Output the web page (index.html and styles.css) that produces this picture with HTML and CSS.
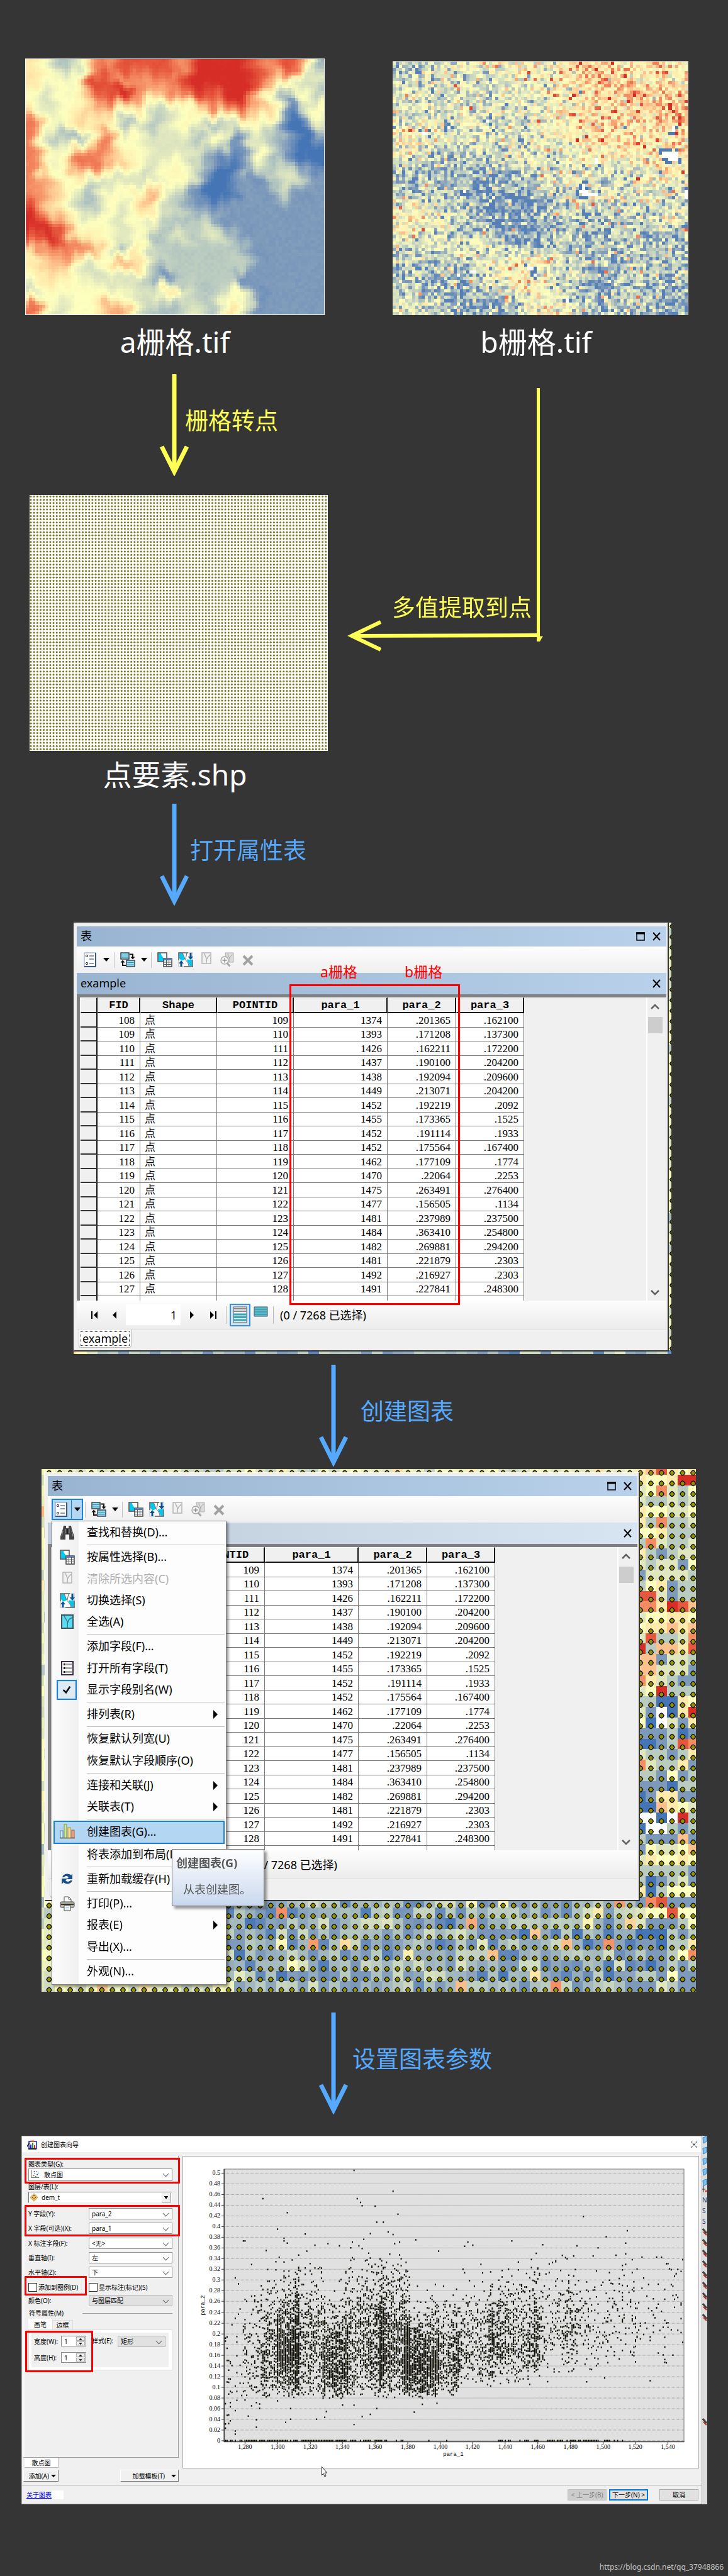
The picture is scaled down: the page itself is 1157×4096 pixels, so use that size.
FILE: index.html
```html
<!DOCTYPE html>
<html lang="zh-CN">
<head>
<meta charset="utf-8">
<title>栅格散点图制作流程</title>
<meta name="viewport" content="width=device-width, initial-scale=1">
<link rel="stylesheet" href="styles.css">
</head>
<body>
<svg class="sprite" aria-hidden="true">
  <symbol id="i-list" viewBox="0 0 24 24"><rect x="3" y="1" width="18" height="22" fill="#fbfcfe" stroke="#8494b4"/><path d="M21 1v22H3" fill="none" stroke="#3d5680" stroke-width="2"/><circle cx="7" cy="6" r="1.6" fill="none" stroke="#222"/><circle cx="7" cy="18" r="1.6" fill="none" stroke="#222"/><path d="M11 6h7M11 11h7M11 18h7" stroke="#8a9ab0" stroke-width="2"/></symbol>
  <symbol id="i-relate" viewBox="0 0 24 24"><rect x="1" y="1" width="13" height="10" fill="#8fdcf0" stroke="#3a4650" stroke-width="1.5"/><path d="M1 4.500h13M1 8h13" stroke="#4a8aa0"/><rect x="10" y="13" width="13" height="10" fill="#8fdcf0" stroke="#3a4650" stroke-width="1.500"/><path d="M10 16.500h13M10 20h13" stroke="#4a8aa0"/><path d="M15 3.500h5v5M9 21H4v-5" fill="none" stroke="#111" stroke-width="2"/><path d="M16.500 7.500h7l-3.500 4zM.5 16.500h7L4 12.500z" fill="#111"/></symbol>
  <symbol id="i-attr" viewBox="0 0 24 24"><rect x="1" y="1" width="14" height="14" fill="#fff" stroke="#444" stroke-width="1.500"/><path d="M2 2h4c0 5 5 5 4 12H2z" fill="#00c8f0"/><rect x="10" y="10" width="13" height="13" fill="#fff" stroke="#444" stroke-width="1.500"/><path d="M10 11.500h13" stroke="#5b7fae" stroke-width="3"/><path d="M10 16h13M10 19.500h13M14.500 12v11M18.500 12v11" stroke="#555"/></symbol>
  <symbol id="i-switch" viewBox="0 0 24 24"><rect x="1" y="1" width="22" height="22" fill="#fff" stroke="#555" stroke-width="1.500"/><path d="M2 2h5l4 9-5 3-4-4zM14 12l8-3v13h-4c0-4-3-5-4-10z" fill="#00c8f0"/><path d="M7 1l4 10c3 4 6 6 6 12M14 1l-2 10" fill="none" stroke="#666"/><path d="M16 0h8v12h-8z" fill="#fff" opacity=".7"/><path d="M0 13h9v11H0z" fill="#fff" opacity=".7"/><path d="M18.500 1v6h-3l4.500 5 4-5h-2.500V1zM3.500 23v-5H1l4-5 4 5H6.500v5z" fill="#0c4f93"/></symbol>
  <symbol id="i-clear" viewBox="0 0 24 24"><rect x="5" y="1" width="14" height="17" fill="#f2f2f2" stroke="#b4b4b4" stroke-width="1.500"/><path d="M9 2c0 5 5 5 3 15M18 4c-2 3-5 3-5 7" fill="none" stroke="#b4b4b4" stroke-width="1.500"/></symbol>
  <symbol id="i-zoomsel" viewBox="0 0 24 24"><path d="M9 1h13v15H12z" fill="#dcdcdc" stroke="#b0b0b0"/><path d="M13 2c0 5 4 5 3 13M21 4c-3 1-5 4-5 6" fill="none" stroke="#a8a8a8"/><circle cx="8" cy="13" r="6" fill="#f4f4f4" stroke="#a8a8a8" stroke-width="1.500"/><path d="M8 9.500v7M4.500 13h7" stroke="#909090" stroke-width="1.500"/><path d="M12 17.500l4.500 5" stroke="#a8a8a8" stroke-width="3"/></symbol>
  <symbol id="i-delete" viewBox="0 0 24 24"><path d="M5 6l14 14M19 6L5 20" stroke="#a2a2a2" stroke-width="4"/></symbol>
  <symbol id="i-all" viewBox="0 0 24 24"><rect x="3" y="1" width="18" height="21" fill="#5adcf2" stroke="#3c5560" stroke-width="2"/><path d="M7 2c1 6 7 5 5 19M20 5c-4 2-7 3-7 8" fill="none" stroke="#357a8c" stroke-width="1.500"/></symbol>
  <symbol id="i-fields" viewBox="0 0 24 24"><rect x="3" y="1" width="18" height="21" fill="#fff" stroke="#3d2b4a" stroke-width="2"/><path d="M6 5.500h3M6 11.500h3M6 17.500h3" stroke="#111" stroke-width="3"/><path d="M10 5.500h9M10 11.500h9M10 17.500h9" stroke="#9a9a9a" stroke-width="2.500"/></symbol>
  <symbol id="i-find" viewBox="0 0 24 24"><path d="M6 1h4v4h4V1h4l1 5 4 12v5h-8v-8H9v8H1v-5L5 6z" fill="#454545"/><path d="M5 9l-2 9M19 9l2 9M9 6v7M15 6v7" stroke="#9a9a9a"/><path d="M12 6v8" stroke="#222" stroke-width="2"/></symbol>
  <symbol id="i-chart" viewBox="0 0 24 24"><path d="M0 22.500h24" stroke="#777" stroke-width="2"/><rect x="1" y="11" width="4" height="11" fill="#cfe6f6" stroke="#4f86b4"/><rect x="7" y="1" width="4" height="21" fill="#cfe39c" stroke="#7a9a3c"/><rect x="13" y="6" width="4" height="16" fill="#f5dc9a" stroke="#c09428"/><rect x="19" y="10" width="4" height="12" fill="#e9a98c" stroke="#b0583a"/></symbol>
  <symbol id="i-reload" viewBox="0 0 24 24"><path d="M4 9c2-6 10-7 14-3l2-3v9h-9l3-3c-3-3-6-2-7 0zM20 14c-2 6-10 7-14 3l-3 3v-9h9l-3 3c3 3 6 2 8 0z" fill="#174f86"/></symbol>
  <symbol id="i-print" viewBox="0 0 24 24"><path d="M7 1h7l4 4v6H7z" fill="#fff" stroke="#555"/><path d="M14 1v4h4" fill="none" stroke="#555"/><rect x="1" y="9" width="22" height="9" rx="2" fill="#b9b7a3" stroke="#444"/><path d="M2 13h20" stroke="#333" stroke-width="2"/><rect x="7" y="15" width="10" height="8" fill="#fff" stroke="#444"/><path d="M9 18h6M9 20.500h6" stroke="#7fb0dc"/></symbol>
  <symbol id="i-arrow" viewBox="0 0 46 162"><path d="M19.500 0h7v152h-7z" fill="currentColor"/><path d="M3 115l20 40 20-40" fill="none" stroke="currentColor" stroke-width="7"/></symbol>
  <symbol id="i-cross" viewBox="0 0 14 14"><path d="M1 1l11 12M12 1L1 13" stroke="#000" stroke-width="2"/></symbol>
  <symbol id="i-box" viewBox="0 0 14 14"><path d="M1 1h12v12H1z" fill="none" stroke="#000" stroke-width="1.500"/><path d="M0 2h14" stroke="#000" stroke-width="3"/></symbol>
</svg>

<main class="flow">
  <section class="sources">
    <div class="branch-a">
      <canvas class="map map-a" id="mapA" width="92" height="79" role="img" aria-label="a栅格"></canvas>
      <p class="caption">a栅格.tif</p>
      <div class="step step-left yellow"><svg class="arrow"><use href="#i-arrow"/></svg><span>栅格转点</span></div>
      <canvas class="map map-points" id="mapPoints" width="474" height="407" role="img" aria-label="点要素"></canvas>
      <p class="caption caption-points">点要素.shp</p>
      <div class="step step-left step-open blue"><svg class="arrow"><use href="#i-arrow"/></svg><span>打开属性表</span></div>
    </div>
    <div class="branch-b">
      <canvas class="map map-b" id="mapB" width="92" height="79" role="img" aria-label="b栅格"></canvas>
      <p class="caption caption-b">b栅格.tif</p>
      <div class="elbow yellow">
        <svg viewBox="0 0 310 416" width="310" height="416" aria-hidden="true"><path d="M300 0h5v395l5-1-5 9h-5z" fill="currentColor"/><path d="M12 391l292-1v6l-292 1z" fill="currentColor"/><path d="M52 372L6 394l46 22" fill="none" stroke="currentColor" stroke-width="6"/></svg>
        <span>多值提取到点</span>
      </div>
    </div>
  </section>

  <section class="shot shot-table">
    <canvas class="backdrop" id="strip" width="950" height="686"></canvas>
    <div class="win" data-window="plain"></div>
    <div class="mark mark-columns"></div>
    <span class="note note-a">a栅格</span>
    <span class="note note-b">b栅格</span>
  </section>

  <div class="step step-mid blue"><svg class="arrow"><use href="#i-arrow"/></svg><span class="far">创建图表</span></div>

  <section class="shot shot-menu">
    <canvas class="backdrop" id="dots" width="1040" height="831"></canvas>
    <div class="win inactive" data-window="menu"></div>
    <div class="menu" role="menu">
      <button role="menuitem"><svg><use href="#i-find"/></svg>查找和替换(D)...</button>
      <hr>
      <button role="menuitem"><svg><use href="#i-attr"/></svg>按属性选择(B)...</button>
      <button role="menuitem" disabled><svg><use href="#i-clear"/></svg>清除所选内容(C)</button>
      <button role="menuitem"><svg><use href="#i-switch"/></svg>切换选择(S)</button>
      <button role="menuitem"><svg><use href="#i-all"/></svg>全选(A)</button>
      <hr>
      <button role="menuitem">添加字段(F)...</button>
      <button role="menuitem"><svg><use href="#i-fields"/></svg>打开所有字段(T)</button>
      <button role="menuitem"><svg class="ticked" viewBox="0 0 30 30"><rect x="1" y="1" width="28" height="28" fill="#deebf5" stroke="#1883d7" stroke-width="2"/><path d="M10 15l4 4 6-9" fill="none" stroke="#111" stroke-width="2.500"/></svg>显示字段别名(W)</button>
      <hr>
      <button role="menuitem" class="sub">排列表(R)</button>
      <hr>
      <button role="menuitem">恢复默认列宽(U)</button>
      <button role="menuitem">恢复默认字段顺序(O)</button>
      <hr>
      <button role="menuitem" class="sub">连接和关联(J)</button>
      <button role="menuitem" class="sub">关联表(T)</button>
      <hr>
      <button role="menuitem" class="current"><svg><use href="#i-chart"/></svg>创建图表(G)...</button>
      <button role="menuitem">将表添加到布局(L)</button>
      <hr>
      <button role="menuitem"><svg><use href="#i-reload"/></svg>重新加载缓存(H)</button>
      <hr>
      <button role="menuitem"><svg><use href="#i-print"/></svg>打印(P)...</button>
      <button role="menuitem" class="sub">报表(E)</button>
      <button role="menuitem">导出(X)...</button>
      <hr>
      <button role="menuitem">外观(N)...</button>
    </div>
    <div class="tip" role="tooltip"><b>创建图表(G)</b><span>从表创建图。</span></div>
  </section>

  <div class="step step-mid step-params blue"><svg class="arrow"><use href="#i-arrow"/></svg><span>设置图表参数</span></div>

  <section class="wizard-wrap">
    <div class="wizard">
      <header class="wizard-title">
        <svg viewBox="0 0 16 16" width="16" height="16" aria-hidden="true"><path d="M3 3h12v11H3z" fill="#fff" stroke="#1a1ad0" stroke-width="1.500"/><path d="M0 11l4-6M2 15h13" stroke="#111" stroke-width="1.500"/><path d="M6 8v6" stroke="#1a1ad0" stroke-width="2"/><path d="M9 5v9" stroke="#1c9a3c" stroke-width="2"/><path d="M12 9v5" stroke="#d22" stroke-width="2"/><path d="M5 1l3 1 2-2 1 3-3 1z" fill="#f70"/></svg>
        <span>创建图表向导</span>
        <button class="bare" aria-label="关闭"><svg viewBox="0 0 12 12" width="12" height="12"><path d="M1 1l10 10M11 1L1 11" stroke="#333"/></svg></button>
      </header>
      <div class="wizard-body">
        <form class="params">
          <div class="panel">
            <div class="group group-type">
              <label for="type">图表类型(G):</label>
              <div class="pick with-icon tall"><svg viewBox="0 0 18 18" aria-hidden="true"><path d="M1 0v16h16" fill="none" stroke="#777" stroke-width="1.500"/><path d="M6 3h2v2H6z M12 9h2v2h-2z" fill="#22d"/><path d="M11 3h2v2h-2z" fill="#a3c"/><path d="M7 7h2v2H7z M9 13h2v2H9z" fill="#1a3"/><path d="M5 11h2v2H5z" fill="#d22"/><path d="M14 6h2v2h-2z" fill="#29c"/></svg><select id="type"><option>散点图</option></select></div>
            </div>
            <label class="layer-label" for="layer">图层/表(L):</label>
            <div class="pick with-icon classic"><svg viewBox="0 0 18 18" aria-hidden="true"><path d="M9 1l8 8-8 8-8-8z" fill="#f3c668" stroke="#a8823a"/><path d="M8 4h2v2H8zM5 8h2v2H5zM11 8h2v2h-2zM8 11h2v2H8z" fill="#443"/></svg><select id="layer"><option>dem_t</option></select></div>
            <div class="group group-fields">
              <div class="row"><label for="fy">Y 字段(Y):</label><div class="pick"><select id="fy"><option>para_2</option></select></div></div>
              <div class="row"><label for="fx">X 字段(可选)(X):</label><div class="pick"><select id="fx"><option>para_1</option></select></div></div>
            </div>
            <div class="row"><label for="fl">X 标注字段(F):</label><div class="pick"><select id="fl"><option>&lt;无&gt;</option></select></div></div>
            <div class="row"><label for="va">垂直轴(I):</label><div class="pick"><select id="va"><option>左</option></select></div></div>
            <div class="row"><label for="ha">水平轴(Z):</label><div class="pick"><select id="ha"><option>下</option></select></div></div>
            <div class="checks"><label class="group group-legend"><input type="checkbox">添加到图例(D)</label><label><input type="checkbox">显示标注(标记)(S)</label></div>
            <div class="row"><label for="co">颜色(O):</label><div class="pick grey"><select id="co"><option>与图层匹配</option></select></div></div>
            <div class="legend"><span>符号属性(M)</span><i></i></div>
            <div class="tabs"><button type="button" class="on">画笔</button><button type="button">边框</button></div>
            <div class="tabpanel">
              <div class="sizes group group-sizes">
                <label for="w">宽度(W):</label><div class="spin"><input id="w" type="number" value="1"><svg viewBox="0 0 16 16"><path d="M1 1h14v6H1zM1 9h14v6H1z" fill="#f0f0f0" stroke="#aaa"/><path d="M5 6h6L8 3zM5 11h6l-3 3z" fill="#111"/></svg></div>
                <label for="h">高度(H):</label><div class="spin"><input id="h" type="number" value="1"><svg viewBox="0 0 16 16"><path d="M1 1h14v6H1zM1 9h14v6H1z" fill="#f0f0f0" stroke="#aaa"/><path d="M5 6h6L8 3zM5 11h6l-3 3z" fill="#111"/></svg></div>
              </div>
              <label for="st" class="style-label">样式(E):</label><div class="pick grey short"><select id="st"><option>矩形</option></select></div>
            </div>
          </div>
          <div class="bottom-tab">散点图</div>
          <div class="actions"><button type="button" class="raised">添加(A)<i></i></button><button type="button" class="raised wide">加载模板(T)<i></i></button></div>
        </form>
        <svg class="chart" id="chart" viewBox="0 0 820 496" role="img" aria-label="para_1 与 para_2 散点图"></svg>
      </div>
      <footer class="wizard-foot">
        <a href="#about">关于图表</a><i class="blank"></i>
        <button class="flat" disabled>&lt; 上一步(B)</button><button class="flat primary">下一步(N) &gt;</button><button class="flat cancel">取消</button>
      </footer>
      <svg class="cursor" viewBox="0 0 12 18" aria-hidden="true"><path d="M1 1v14l3-3 2 5 2-1-2-5h4z" fill="#fff" stroke="#333"/></svg>
    </div>
    <svg class="edge" id="edge" width="8" height="586" aria-hidden="true"></svg>
  </section>
  <p class="credit">https://blog.csdn.net/qq_37948866</p>
</main>
<script src="app.js"></script>
</body>
</html>
```
FILE: styles.css
```css
* { box-sizing: border-box; }
body {
  margin: 0;
  background: #353535;
  color: #000;
  font-family: "Noto Sans", "Noto Sans CJK SC", sans-serif;
}
button, input, select { font: inherit; color: inherit; }
.sprite { position: absolute; width: 0; height: 0; }
.flow { position: relative; padding: 93px 0 114px; overflow: hidden; }
.yellow { color: #ffff55; }
.blue { color: #55aaff; }

/* rasters and their captions */
.sources { display: grid; grid-template-columns: 540px 1fr; }
.branch-a { padding-left: 40px; }
.branch-b { padding-top: 4px; }
.map { display: block; }
.map-a { width: 476px; height: 408px; border: 1px solid #fff; image-rendering: pixelated; }
.map-b { width: 470px; height: 404px; margin-left: 84px; border-top: 1px solid #bbb; border-right: 1px solid #ddd; image-rendering: pixelated; }
.map-points { width: 474px; height: 407px; margin: 30px 0 0 7px; }
.caption {
  width: 476px;
  margin: 12px 0 0;
  padding-bottom: 3px;
  color: #fff;
  font-size: 46px;
  line-height: 60px;
  text-align: center;
}
.caption-points { margin-top: 7px; }
.caption-b { width: 456px; margin-left: 84px; }

/* flow arrows */
.step { display: flex; align-items: center; font-size: 37px; line-height: 48px; }
.step span { padding-bottom: 14px; }
.arrow { width: 46px; height: 162px; flex: none; }
.step-left { margin: 19px 0 0 214px; }
.step-left span { margin-left: -6px; }
.step-open { margin-top: 14px; }
.step-open span { margin-left: 2px; }
.step-mid { margin: 17px 0 0 507px; }
.step-mid span { margin-left: 7px; }
.step-mid .far { margin-left: 20px; }
.step-params { margin-top: 33px; }
.elbow { display: grid; width: 310px; margin: 41px 0 0 13px; }
.elbow svg, .elbow span { grid-area: 1 / 1; }
.elbow svg { overflow: visible; }
.elbow span { margin: 325px 0 0 70px; font-size: 37px; line-height: 48px; white-space: nowrap; }

/* attribute table windows */
.shot { position: relative; }
.shot-table { width: 950px; margin: 27px 0 0 117px; padding: 0 4px 4px 0; }
.shot-menu { width: 1040px; margin: 4px 0 0 66px; padding: 5px 89px 144px 5px; }
.backdrop { position: absolute; inset: 0; width: 100%; height: 100%; }
.win {
  position: relative;
  padding: 5px 2px 0 4px;
  background: #f0f0f0;
  border: 1px solid #fff;
  border-right: 2px solid #333;
  border-bottom: 2px solid #333;
  font-size: 18px;
}
.bar { display: flex; align-items: center; gap: 12px; height: 32px; padding: 0 8px 0 6px; background: linear-gradient(90deg, #99b4d1, #b9d1ea); line-height: 28px; }
.bar span { flex: 1; padding-bottom: 2px; }
.bar svg { width: 14px; height: 14px; display: block; }
.bar.sheet { height: 34px; }
.inactive .sheet { background: linear-gradient(90deg, #bfcddb, #d7e4f2); }
.inactive .sheet span { visibility: hidden; }
.bare { padding: 0; border: 0; background: none; }
.tools { display: flex; align-items: center; height: 42px; padding-left: 6px; background: linear-gradient(#fdfdfd, #efefef); }
.tools button { display: flex; align-items: center; height: 34px; padding: 0; border: 0; background: none; }
.tools svg { width: 24px; height: 24px; }
.tools .drop::after {
  content: "";
  margin-left: 9px;
  border: 5px solid transparent;
  border-top: 6px solid #000;
  border-bottom: 0;
}
.tools .drop { width: 50px; padding-left: 3px; margin-right: 3px; }
.tools .drop + i + .drop { padding-left: 0; width: 46px; }
.tools i { width: 1px; height: 25px; margin-right: 9px; background: #c4c4c4; }
.tools .gap { margin-right: 9px; }
.inactive .tools .drop:first-child { background: linear-gradient(90deg, #b3d7f3 31px, #1883d7 31px, #1883d7 32px, #b3d7f3 32px); outline: 2px solid #1883d7; outline-offset: -2px; }
.grid {
  display: flex;
  justify-content: space-between;
  height: 487px;
  overflow: hidden;
  border: solid #808080;
  border-width: 5px 0 0 5px;
  padding-left: 1px;
}
.attrs { width: 705px; border-spacing: 0; table-layout: fixed; font-family: "Liberation Serif", "Noto Sans CJK SC", serif; font-size: 17px; line-height: 19px; }
.attrs th { height: 25px; padding: 0; background: #f0f0f0; border: 1px solid #fff; border-right: 2px solid #111; border-bottom: 2px solid #111; font-family: "Liberation Mono", monospace; }
.attrs td { height: 22px; padding: 0 8px 0 7px; overflow: hidden; background: #fff; border: solid #777; border-width: 0 1px 1px 0; text-align: right; }
.attrs tr:nth-child(odd) td { height: 23px; }
.attrs td:first-child { background: #f0f0f0; border-right: 2px solid #111; border-bottom: 2px solid #333; }
.attrs td:nth-child(3) { text-align: left; }
.scroll { display: flex; flex-direction: column; align-items: center; width: 26px; margin-right: 6px; padding: 10px 0 8px; border-left: 2px solid #fff; }
.scroll svg { width: 14px; height: 9px; }
.scroll b { width: 23px; height: 26px; margin: 12px 0 auto; background: #cdcdcd; }
.nav { display: flex; align-items: center; height: 46px; padding-left: 22px; background: linear-gradient(#fdfdfd, #ececec); border-bottom: 1px solid #ddd; }
.nav svg { width: 12px; height: 14px; }
.nav button { padding: 0; border: 0; background: none; line-height: 0; }
.nav input { width: 87px; height: 33px; margin: 0 12px; padding: 0 6px; border: 0; background: #fff; text-align: right; }
.nav .first { margin-right: 20px; }
.nav .next { margin-right: 22px; }
.nav .last { margin-right: 14px; }
.nav i { width: 1px; height: 28px; background: #bbb; }
.nav .view { width: 33px; height: 36px; margin: 0 5px; background: #cfe5f7; border: 2px solid #3c8edb; }
.nav .view svg, .nav .view2 svg { width: 23px; height: 27px; }
.nav .view2 { margin-right: 8px; }
.nav span { margin-left: 10px; padding-bottom: 2px; white-space: nowrap; }
.sheets { height: 33px; padding-left: 3px; }
.sheets button { display: block; height: 29px; padding: 0 5px; border: 1px solid #bbb; border-top: 0; border-radius: 0 0 4px 4px; background: #fff; line-height: 24px; outline: 1px dotted #333; outline-offset: -4px; }

/* annotations over the first window */
.mark { position: absolute; border: 3px solid #f00; }
.mark-columns { left: 343px; top: 98px; width: 271px; height: 510px; }
.note { position: absolute; top: 62px; color: #f00; font-size: 23px; line-height: 32px; }
.note-a { left: 392px; }
.note-b { left: 526px; }

/* drop-down menu and its tooltip */
.menu {
  position: absolute;
  left: 16px;
  top: 82px;
  display: flex;
  flex-direction: column;
  width: 278px;
  height: 738px;
  padding: 1px 2px 3px;
  border: 1px solid #808080;
  background: linear-gradient(90deg, #fcfcfc, #f0f0f0 42px, #fdfdfd 42px);
  box-shadow: 3px 3px 4px rgba(0, 0, 0, .4);
  font-size: 18px;
}
.menu button { position: relative; flex: 1; min-height: 0; padding: 0 0 2px 52px; border: 1px solid transparent; background: none; line-height: 24px; text-align: left; white-space: nowrap; }
.menu button:disabled { color: #b0b0b0; }
.menu svg { position: absolute; left: 9px; top: 4px; width: 24px; height: 24px; }
.menu svg.ticked { left: 4px; top: 0; width: 32px; height: 32px; }
.menu hr { width: 219px; height: 1px; margin: 2px 0 2px auto; border: 0; background: #bdbdbd; }
.menu .current { background: #b3d7f3; border: 2px solid #1883d7; padding-left: 51px; }
.menu .current svg { left: 8px; top: 3px; }
.menu .sub::after { content: ""; position: absolute; right: 10px; top: 9px; border: 7px solid transparent; border-left: 7px solid #000; border-right: 0; }
.tip {
  position: absolute;
  left: 207px;
  top: 604px;
  display: grid;
  align-content: space-around;
  width: 147px;
  height: 91px;
  padding: 0 0 5px 6px;
  border: 1px solid #767676;
  background: linear-gradient(#fff, #c9d8ee);
  box-shadow: 4px 4px 4px rgba(0, 0, 0, .4);
  color: #575757;
  font-size: 18px;
  line-height: 26px;
  white-space: nowrap;
}
.tip span { padding-left: 11px; }

/* chart wizard */
.wizard-wrap { display: flex; margin: 34px 33px 0 34px; font-size: 10px; line-height: 14px; }
.wizard { position: relative; flex: 1; background: #f0f0f0; border: 1px solid #aaa; }
.wizard-title { display: flex; align-items: center; gap: 6px; height: 25px; padding: 0 6px 0 8px; background: #fff; }
.wizard-title span { flex: 1; }
.wizard-title svg { display: block; }
.wizard-body { display: grid; grid-template-columns: 247px 1fr; column-gap: 6px; align-items: start; height: 530px; padding: 6px 4px 0 2px; border-bottom: 1px solid #aaa; }
.panel { height: 480px; padding: 3px 9px 0 8px; border: solid #a0a0a0; border-width: 0 1px 1px 0; box-shadow: inset 2px 2px #f8f8f8; }
.group { position: relative; }
.group::after { content: ""; position: absolute; border: 3px solid #f00; border-radius: 1px; pointer-events: none; }
.group-type { padding-top: 3px; }
.group-type::after { inset: 0 -12px -4px -6px; }
.group-type label, .layer-label { display: block; }
.layer-label { margin-top: 2px; }
.group-fields { margin: 3px 0; padding: 5px 0 3px; }
.group-fields::after { inset: 0 -12px -1px -6px; }
.row { display: grid; grid-template-columns: 96px 1fr; align-items: center; height: 18px; margin-bottom: 5px; }
.group-fields .row:last-child { margin-bottom: 0; }
.pick { position: relative; height: 18px; }
.pick.tall { height: 20px; }
.pick select { display: block; width: 100%; height: 100%; padding: 0 4px; border: 1px solid #919191; border-radius: 0; background: #fff; appearance: none; }
.pick::after { content: ""; position: absolute; right: 7px; top: 5px; width: 6px; height: 6px; border: solid #666; border-width: 0 1px 1px 0; rotate: 45deg; }
.pick.with-icon select { padding-left: 24px; }
.pick svg { position: absolute; left: 4px; top: 2px; width: 14px; height: 14px; }
.pick.classic { margin-top: 1px; }
.pick.classic select { padding-left: 20px; border: 1px solid #777; border-right-color: #eee; border-bottom-color: #eee; }
.pick.classic svg { left: 2px; }
.pick.classic::after { rotate: none; right: 2px; top: 2px; width: 14px; height: 14px; border: 1px solid #888; border-width: 0 1px 1px 0; background: linear-gradient(#111, #111) 50% 5px / 6px 1px no-repeat, linear-gradient(#111, #111) 50% 6px / 4px 2px no-repeat, linear-gradient(#111, #111) 50% 8px / 2px 1px no-repeat, #f0f0f0; }
.pick.grey select { background: #e1e1e1; border-color: #b5b5b5; }
.checks { display: grid; grid-template-columns: 96px 1fr; height: 20px; margin: 0 0 2px; }
.checks label { display: flex; align-items: center; gap: 2px; white-space: nowrap; }
.checks input { width: 14px; height: 14px; margin: 0; appearance: none; border: 1px solid #333; background: #fff; }
.group-legend::after { inset: -8px 3px -3px -6px; }
.legend { display: flex; align-items: center; gap: 30px; margin-top: -3px; padding-left: 1px; height: 18px; }
.legend i { flex: 1; height: 1px; background: #a0a0a0; }
.tabs { display: flex; align-items: end; height: 17px; }
.tabs button { width: 33px; height: 15px; padding: 0; border: 1px solid #ddd; border-bottom: 0; background: #f0f0f0; line-height: 14px; }
.tabs .on { width: 38px; height: 17px; background: #fff; border-color: #fff; }
.tabpanel { display: flex; height: 65px; padding: 4px 5px 4px 4px; border: 1px solid #ddd; background: linear-gradient(#f0f0f0, #f0f0f0) content-box, #fff; }
.sizes { display: grid; grid-template-columns: 43px 40px; grid-auto-rows: 17px; row-gap: 9px; width: 96px; padding: 5px 0 0 4px; align-items: center; }
.sizes::after { inset: -3px -2px -8px -10px; }
.spin { display: flex; height: 17px; border: 1px solid #888; background: #fff; }
.spin input { width: 22px; min-width: 0; padding: 0 0 0 4px; border: 0; background: none; appearance: textfield; }
.spin input::-webkit-inner-spin-button { appearance: none; }
.spin svg { width: 16px; height: 15px; background: #f0f0f0; }
.style-label { margin-top: 6px; width: 41px; overflow: hidden; }
.pick.short { width: 76px; margin-top: 5px; }
.bottom-tab { width: 54px; height: 16px; margin-left: 2px; background: #fff; border: solid #bbb; border-width: 0 1px 1px 0; line-height: 16px; text-align: center; }
.actions { display: flex; justify-content: space-between; margin-top: 3px; }
.raised { display: flex; align-items: center; justify-content: end; gap: 3px; width: 56px; height: 19px; padding: 0 3px; border: 1px solid #fff; border-right-color: #777; border-bottom-color: #777; background: #f0f0f0; white-space: nowrap; }
.raised i { border: 4px solid transparent; border-top: 4px solid #000; border-bottom: 0; }
.raised.wide { width: 93px; gap: 10px; }
.chart { display: block; width: 100%; border: 1px solid #a8a8a8; background: #fff; font-family: "Liberation Serif", serif; font-size: 10px; }
.chart .title { font-family: "Liberation Mono", monospace; font-size: 9px; }
.wizard-foot { display: flex; align-items: center; height: 29px; padding: 0 5px 0 7px; }
.wizard-foot a { color: #00f; }
.blank { width: 18px; height: 14px; margin: 0 auto 0 1px; background: #fff; }
.flat { width: 62px; height: 18px; padding: 0; border: 1px solid #adadad; background: #e1e1e1; line-height: 14px; white-space: nowrap; }
.flat:disabled { background: #ccc; border-color: #bfbfbf; color: #838383; }
.flat.primary { margin-left: 4px; border: 2px solid #0078d7; }
.flat.cancel { margin-left: 18px; }
.cursor { position: absolute; left: 475px; top: 524px; width: 12px; height: 18px; }
.edge { flex: none; background: #dcdcdc; }
.credit { position: absolute; right: 7px; bottom: 5px; margin: 0; color: #c4c4c4; font-size: 12px; line-height: 18px; }
```
FILE: app.js
```js
// Seeded generator, so that every load draws the same samples.
function makeRandom(seed) {
  return function () {
    seed = (seed + 0x6d2b79f5) | 0;
    let t = Math.imul(seed ^ (seed >>> 15), 1 | seed);
    t = (t + Math.imul(t ^ (t >>> 7), 61 | t)) ^ t;
    return ((t ^ (t >>> 14)) >>> 0) / 4294967296;
  };
}
function normal(rnd) {
  return Math.sqrt(-2 * Math.log(1 - rnd())) * Math.cos(6.2832 * rnd());
}

// Red - yellow - blue ramp, 0 to 9.
const ramp = [[214, 45, 38], [230, 88, 62], [244, 140, 98], [252, 193, 140], [254, 235, 172],
  [253, 255, 190], [224, 231, 191], [186, 203, 192], [126, 154, 187], [69, 117, 181]];
function colour(v) {
  v = Math.max(0, Math.min(9, v));
  const i = Math.min(8, Math.floor(v)), f = v - i;
  return 'rgb(' + ramp[i].map((c, k) => Math.round(c + (ramp[i + 1][k] - c) * f)).join() + ')';
}
// Catmull-Rom interpolation over a coarse grid of ramp values.
function cubic(a, b, c, d, t) {
  return b + .5 * t * (c - a + t * (2 * a - 5 * b + 4 * c - d + t * (3 * (b - c) + d - a)));
}
function sample(rows, u, v) {
  const h = rows.length, w = rows[0].length;
  const x = u * w - .5, y = v * h - .5, i = Math.floor(x), j = Math.floor(y);
  const g = (a, b) => +rows[Math.max(0, Math.min(h - 1, b))][Math.max(0, Math.min(w - 1, a))];
  const line = b => cubic(g(i - 1, b), g(i, b), g(i + 1, b), g(i + 2, b), x - i);
  return cubic(line(j - 1), line(j), line(j + 1), line(j + 2), y - j);
}

const fieldA = [
  '45762211112000012137', '45551122221000013366', '56552102332110025757', '46543344665432234875',
  '25544476765576555896', '26774255666756867898', '25532245666678857899', '25522345655789867789',
  '23546666655799887678', '23467554367899888788', '13467564467888888888', '01355565677778888888',
  '10144565776767888888', '42223574677777788888', '43356534777777788888', '54456666787777888888',
  '65555556646776588888', '25655336777674688888'];
const fieldB = ['76655344', '66665434', '66665443', '56665444', '67766554', '77876665', '67887666',
  '56887776', '66687777', '77656777', '78656877', '67865778'];

function drawA() {
  const c = document.getElementById('mapA').getContext('2d'), rnd = makeRandom(3);
  for (let y = 0; y < 79; y++) for (let x = 0; x < 92; x++) {
    const u = (x + .5 + 1.1 * Math.sin(y * .55 + x * .2) + .6 * Math.sin(y * 1.3)) / 92;
    const v = (y + .5 + 1.1 * Math.sin(x * .6 - y * .25) + .8 * Math.sin(x * 1.4)) / 79;
    c.fillStyle = colour(sample(fieldA, u, v) + (rnd() - .5) * .16);
    c.fillRect(x, y, 1, 1);
  }
}
function drawB() {
  const c = document.getElementById('mapB').getContext('2d'), rnd = makeRandom(11);
  for (let y = 0; y < 79; y++) for (let x = 0; x < 92; x++) {
    const m = sample(fieldB, (x + .5) / 92, (y + .5) / 79);
    let v = m + normal(rnd) * 1.25;
    if (rnd() < .035) v -= 3;
    c.fillStyle = colour(Math.min(v, 8.7));
    c.fillRect(x, y, 1, 1);
  }
  // no-data patches: column, row, width, height
  const holes = [[84, 28, 5, 2], [86, 28, 3, 3], [59, 38, 1, 4], [58, 40, 3, 1], [60, 41, 4, 1], [91, 40, 1, 3], [22, 40, 1, 1], [24, 65, 2, 1],
    [42, 64, 2, 1], [44, 66, 1, 1], [9, 22, 2, 1], [17, 20, 1, 1], [87, 20, 1, 2], [63, 30, 1, 2], [29, 18, 1, 1], [54, 74, 1, 1], [20, 66, 1, 1]];
  holes.forEach(([x, y, w, h]) => {
    c.fillStyle = colour(8.8);
    for (let i = -1; i <= w; i++) for (let j = -1; j <= h; j++) if (rnd() < .35) c.fillRect(x + i, y + j, 1, 1);
  });
  c.fillStyle = '#fff';
  holes.forEach(([x, y, w, h]) => c.fillRect(x, y, w, h));
}
function drawPoints() {
  const c = document.getElementById('mapPoints').getContext('2d');
  c.fillStyle = '#fff';
  c.fillRect(0, 0, 474, 407);
  c.fillStyle = '#75751c';
  for (let y = 0; y < 79; y++) for (let x = 0; x < 92; x++) {
    c.beginPath();
    c.arc(2 + x * 5.152, 2.5 + y * 5.152, 1.5, 0, 7);
    c.fill();
  }
}

const rightCells = ['431454', '455400', '652675', '677676', '455665', '472776', '554777', '726776', '478766',
  '676685', '866667', '754877', '116877', '224013', '655445', '544343', '617762', '073341', '338667', '336668',
  '246788', '650777', '779945', '68w940', '59w684', '888798', '998712', '677874', '267748', '778587', '888977',
  '984488', '993456', 'ww9w07', '9ww787', '788838', '856653', '645545', '777778', '798768', '497555', '821888',
  '655155', '688875', '999787', '889774', '788752', '898787', '778588', '886788'];
function drawDots(id, seed) {
  const el = document.getElementById(id), c = el.getContext('2d'), rnd = makeRandom(seed), p = 16.78;
  for (let r = 0; r < 50; r++) for (let k = -1; k < 62; k++) {
    let mean = r > 40 ? 7.5 : 5.8;
    if (k < 2 || r > 48 && k < 18) mean = 5.6;
    let v = mean + normal(rnd) * .65;
    if (rnd() < .05) v = 2 + rnd() * 3;
    c.fillStyle = colour(Math.min(v, 8.9));
    if (id === 'dots' && k > 55) {
      const ch = rightCells[r][k - 56];
      c.fillStyle = ch === 'w' ? '#fff' : colour(+ch);
    }
    c.fillRect(Math.round(4 + p * k), Math.round(9 + p * (r - 1)), 17, 17);
  }
  c.fillStyle = '#949400';
  c.strokeStyle = '#0a0a0a';
  c.lineWidth = 1.3;
  for (let r = 0; r < 50; r++) for (let k = 0; k < 62; k++) {
    c.beginPath();
    const x = 12 + p * k, y = 6 + p * r;
    c.moveTo(x - 4, y); c.lineTo(x - 2, y - 3); c.lineTo(x, y - 4); c.lineTo(x + 2, y - 3);
    c.lineTo(x + 4, y); c.lineTo(x + 2, y + 3); c.lineTo(x, y + 4); c.lineTo(x - 2, y + 3);
    c.closePath();
    c.fill();
    c.stroke();
  }
}

// Attribute table: FID starts at 108, POINTID is one more.
const records = [[1374, '.201365', '.162100'], [1393, '.171208', '.137300'], [1426, '.162211', '.172200'],
  [1437, '.190100', '.204200'], [1438, '.192094', '.209600'], [1449, '.213071', '.204200'], [1452, '.192219', '.2092'],
  [1455, '.173365', '.1525'], [1452, '.191114', '.1933'], [1452, '.175564', '.167400'], [1462, '.177109', '.1774'],
  [1470, '.22064', '.2253'], [1475, '.263491', '.276400'], [1477, '.156505', '.1134'], [1481, '.237989', '.237500'],
  [1484, '.363410', '.254800'], [1482, '.269881', '.294200'], [1481, '.221879', '.2303'], [1492, '.216927', '.2303'],
  [1491, '.227841', '.248300']];
const use = name => `<svg><use href="#i-${name}"/></svg>`;
function fillWindow(el) {
  const id = 'record-' + el.dataset.window;
  const rows = records.map((r, i) => `<tr><td></td><td>${108 + i}</td><td>点</td><td>${109 + i}</td><td>${r.join('</td><td>')}</td></tr>`).join('');
  el.innerHTML = `
    <div class="bar"><span>表</span><button class="bare" aria-label="最大化">${use('box')}</button><button class="bare" aria-label="关闭">${use('cross')}</button></div>
    <div class="tools"><button class="drop" aria-label="表选项">${use('list')}</button><i></i><button class="drop" aria-label="相关表">${use('relate')}</button><i></i>
      <button class="gap" aria-label="按属性选择">${use('attr')}</button><button class="gap" aria-label="切换选择">${use('switch')}</button><button class="gap" aria-label="清除">${use('clear')}</button><button class="gap" aria-label="缩放至所选">${use('zoomsel')}</button><button aria-label="删除">${use('delete')}</button></div>
    <div class="bar sheet"><span>example</span><button class="bare" aria-label="关闭表">${use('cross')}</button></div>
    <div class="grid">
      <table class="attrs"><colgroup><col style="width:27px"><col style="width:68px"><col style="width:122px"><col style="width:122px"><col style="width:149px"><col style="width:109px"><col style="width:108px"></colgroup>
      <thead><tr><th></th><th>FID</th><th>Shape</th><th>POINTID</th><th>para_1</th><th>para_2</th><th>para_3</th></tr></thead>
      <tbody>${rows}<tr>${'<td></td>'.repeat(7)}</tr></tbody></table>
      <div class="scroll"><svg viewBox="0 0 14 9"><path d="M1 8l6-6 6 6" fill="none" stroke="#606060" stroke-width="2.500"/></svg><b></b><svg viewBox="0 0 14 9"><path d="M1 1l6 6 6-6" fill="none" stroke="#606060" stroke-width="2.500"/></svg></div>
    </div>
    <div class="nav">
      <button class="first" aria-label="第一条"><svg viewBox="0 0 12 14"><path d="M1 1h2v12H1zM11 1v12L5 7z"/></svg></button>
      <button class="prev" aria-label="上一条"><svg viewBox="0 0 12 14"><path d="M9 1v12L3 7z"/></svg></button>
      <input id="${id}" aria-label="记录" value="1">
      <button class="next" aria-label="下一条"><svg viewBox="0 0 12 14"><path d="M3 1v12l6-6z"/></svg></button>
      <button class="last" aria-label="最后一条"><svg viewBox="0 0 12 14"><path d="M9 1h2v12H9zM1 1v12l6-6z"/></svg></button><i></i>
      <button class="view" aria-label="全部记录"><svg viewBox="0 0 23 27"><path d="M1 1h21v25H1z" fill="#eee" stroke="#555"/><path d="M1 4h21M1 8h21" stroke="#888" stroke-width="2"/><path d="M1 13h21M1 17.500h21M1 22h21" stroke="#35a5b8" stroke-width="3"/></svg></button>
      <button class="view2" aria-label="所选记录"><svg viewBox="0 0 23 27"><path d="M1 1h21v15H1z" fill="#5cbccc" stroke="#456"/><path d="M1 5h21M1 9h21M1 13h21" stroke="#2d8798"/></svg></button><i></i>
      <span>(0 / 7268 已选择)</span>
    </div>
    <div class="sheets"><button>example</button></div>`;
}

// Scatter chart.
function drawChart() {
  const rnd = makeRandom(29), X = v => 98.5 + (v - 1280) * 2.589, Y = v => 452 - v * 852;
  // from, to, count, mean, spread
  const bands = [[1268, 1280, 40, .15, .06], [1280, 1290, 110, .17, .055], [1290, 1300, 280, .165, .06], [1300, 1314, 1050, .172, .05],
    [1311, 1330, 520, .17, .06], [1328, 1344, 720, .148, .045], [1342, 1366, 850, .175, .065], [1363, 1382, 1050, .175, .06],
    [1378, 1400, 1250, .142, .042], [1396, 1412, 360, .15, .042], [1408, 1434, 420, .175, .045], [1430, 1462, 750, .195, .048],
    [1458, 1484, 270, .215, .05], [1480, 1504, 150, .215, .045], [1502, 1522, 90, .24, .05], [1518, 1550, 75, .24, .045]];
  const pts = [];
  bands.forEach(([a, b, n, m, s]) => {
    for (let i = 0; i < n; i++) {
      const x = a + Math.floor(rnd() * (b - a));
      const floor = (x < 1290 ? .03 : x < 1412 ? .078 : .1) + Math.abs(normal(rnd)) * .01;
      let v = 0;
      for (let t = 0; t < 8 && (v < floor || v > .35); t++) {
        const g = normal(rnd);
        v = m + g * s * (g > 0 ? 1.15 : 1);
        if (v > .04 && rnd() < .02) break;
      }
      if (v > .02 && v < .35) pts.push([x, v]);
    }
  });
  pts.push([1347, .505], [1371, .466], [1291, .452], [1349, .452], [1351, .445], [1352, .439], [1360, .438], [1306, .426],
    [1374, .423], [1488, .419], [1361, .408], [1365, .408], [1300, .395], [1515, .392], [1368, .39], [1357, .387], [1317, .386],
    [1371, .385], [1502, .381], [1304, .378], [1353, .376], [1385, .375], [1279, .373], [1280, .373], [1304, .373], [1444, .373],
    [1346, .371], [1375, .371], [1417, .371], [1306, .369], [1514, .369], [1331, .368], [1372, .368], [1463, .366], [1323, .365],
    [1420, .365], [1338, .364], [1350, .364], [1484, .364], [1415, .363], [1497, .36], [1345, .36], [1352, .359], [1293, .355],
    [1399, .354], [1318, .354], [1514, .349], [1475, .346], [1482, .345], [1494, .345], [1477, .342], [1518, .338], [1549, .338],
    [1471, .336], [1546, .32], [1541, .321], [1496, .317], [1284, .329], [1274, .304], [1276, .293], [1268, .069], [1268, .031],
    [1268, .023], [1270, .087], [1270, .048], [1270, .032], [1271, .063], [1271, .037], [1274, .012], [1274, .018], [1274, .056],
    [1287, .039], [1287, .025], [1305, .034], [1308, .04], [1324, .04], [1347, .03], [1352, .045], [1384, .053], [1357, .049], [1361, .06]);
  for (let x = 1268; x < 1515; x++) {
    const p = x < 1366 ? .75 : x < 1380 ? .5 : x < 1435 ? .06 : x < 1465 ? .4 : .7;
    if (rnd() < p) pts.push([x, 0]);
  }
  let s = '<rect x="65" y="20" width="732" height="434" fill="#e0e0e0" stroke="#777"/>';
  let lines = '', ticks = '';
  for (let i = 0; i <= 25; i++) {
    const y = Math.round(452 - i * 17.04) + .5;
    lines += `M66 ${y}h731`;
    ticks += `M61 ${y}h5`;
    s += `<text x="59" y="${y + 3}" text-anchor="end">${+(i * .02).toFixed(2)}</text>`;
  }
  for (let i = 0; i < 14; i++) {
    const x = Math.round(98 + i * 51.78) + .5;
    ticks += `M${x} 454v4`;
    s += `<text x="${x}" y="466" text-anchor="middle">1,${280 + i * 20}</text>`;
  }
  s += `<path d="${lines}" stroke="#999" stroke-dasharray="1 1"/><path d="${ticks}" stroke="#333"/>`;
  s += '<path d="M65.500 20v434h732" fill="none" stroke="#444" stroke-width="1.500"/>';
  s += '<text class="title" x="430" y="477" text-anchor="middle">para_1</text>';
  s += '<text class="title" x="34" y="237" text-anchor="middle" transform="rotate(-90 34 237)">para_2</text>';
  const d = pts.map(([a, b]) => `M${(X(a) - 1).toFixed(1)} ${(Y(b) - 1).toFixed(1)}h2v2.500h-2z`).join('');
  s += `<path d="${d}" fill="#0e0e04"/>`;
  document.getElementById('chart').innerHTML = s;
}

// Sliver of the toolbox list beside the wizard.
function drawEdge() {
  let s = '';
  for (let i = 0; i < 5; i++) s += `<path d="M1 ${i * 17 + 3}l6-2v8l-5 3z" fill="#7fc0ee" stroke="#2f7fc4"/>`;
  s += '<path d="M2 80v10M0 85h5" stroke="#333"/><path d="M4 86l4 4M8 86l-4 4" stroke="#c22"/>';
  ['N', 'S', 'S'].forEach((t, i) => { s += `<text x="0" y="${106 + i * 17}" font-size="10" fill="#123a6b">${t}</text>`; });
  for (let i = 0; i < 10; i++) {
    const y = i < 9 ? 148 + i * 17 : 450;
    s += `<path d="M1 ${y}l6 7" stroke="#444" stroke-width="3"/><path d="M2 ${y + 5}l5 5" stroke="#b33022" stroke-width="2"/>`;
  }
  document.getElementById('edge').innerHTML = s;
}

document.querySelectorAll('[data-window]').forEach(fillWindow);
drawA();
drawB();
drawPoints();
drawDots('strip', 5);
drawDots('dots', 8);
drawChart();
drawEdge();
```
